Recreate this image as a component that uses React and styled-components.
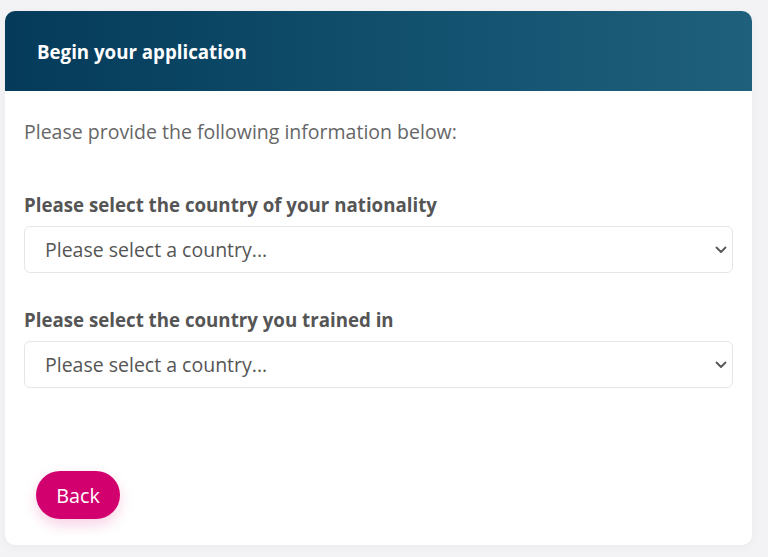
import styled, { createGlobalStyle } from 'styled-components';

const GlobalStyle = createGlobalStyle`
  * { box-sizing: border-box; }
  html, body {
    margin: 0;
    padding: 0;
    background: #f3f3f5;
    font-family: "Open Sans", "Noto Sans", sans-serif;
  }
`;

const Page = styled.main`
  width: 768px;
  height: 557px;
  padding: 11px 16px 12px 5px;
`;

const Card = styled.section`
  height: 100%;
  background: #ffffff;
  border-radius: 10px;
  overflow: hidden;
  display: flex;
  flex-direction: column;
  box-shadow: 0 2px 8px rgba(0, 0, 0, 0.04);
`;

const Header = styled.header`
  height: 80px;
  flex-shrink: 0;
  display: flex;
  align-items: center;
  padding: 0 32px;
  background: linear-gradient(90deg, #053a5a 0%, #0f4d6b 45%, #1f607d 100%);
`;

const Title = styled.h1`
  margin: 0;
  font-size: 18.7px;
  font-weight: 700;
  color: #ffffff;
`;

const Body = styled.div`
  flex: 1;
  display: flex;
  flex-direction: column;
  padding: 27px 19px 26px 19px;
`;

const Intro = styled.p`
  margin: 0 0 47px;
  font-size: 19.5px;
  line-height: 27px;
  color: #666666;
`;

const Field = styled.div`
  display: flex;
  flex-direction: column;
  gap: 8px;
  margin-bottom: ${(p) => p.$gap || 0}px;
`;

const Label = styled.label`
  font-size: 18.7px;
  line-height: 26px;
  font-weight: 700;
  color: #555555;
`;

const SelectBox = styled.div`
  height: 47px;
  display: flex;
  align-items: center;
  justify-content: space-between;
  padding: 0 5px 0 20px;
  border: 1px solid #e6e6e6;
  border-radius: 6px;
  font-size: 19.5px;
  color: #555555;
  background: #ffffff;
`;

const Chevron = () => (
  <svg width="12" height="8" viewBox="0 0 12 8" fill="none">
    <path d="M1.5 1.5 6 6l4.5-4.5" stroke="#555" strokeWidth="1.8" strokeLinecap="round" strokeLinejoin="round" />
  </svg>
);

const Footer = styled.div`
  margin-top: auto;
  padding-left: 12px;
`;

const BackButton = styled.button`
  width: 84px;
  height: 48px;
  padding: 0;
  border: none;
  border-radius: 24px;
  background: #d2006f;
  color: #ffffff;
  font-family: inherit;
  font-size: 19.8px;
  cursor: pointer;
  box-shadow: 0 6px 14px rgba(210, 0, 111, 0.18);
`;

const App = () => (
  <Page>
    <GlobalStyle />
    <Card>
      <Header>
        <Title>Begin your application</Title>
      </Header>
      <Body>
        <Intro>Please provide the following information below:</Intro>
        <Field $gap={34}>
          <Label>Please select the country of your nationality</Label>
          <SelectBox>
            Please select a country...
            <Chevron />
          </SelectBox>
        </Field>
        <Field>
          <Label>Please select the country you trained in</Label>
          <SelectBox>
            Please select a country...
            <Chevron />
          </SelectBox>
        </Field>
        <Footer>
          <BackButton>Back</BackButton>
        </Footer>
      </Body>
    </Card>
  </Page>
);

export default App;
